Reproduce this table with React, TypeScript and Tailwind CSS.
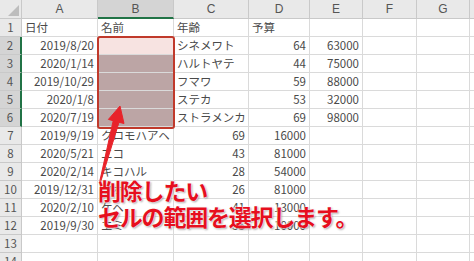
import React from 'react'

const widths = ['w-[76px]', 'w-[76px]', 'w-[75px]', 'w-[61px]', 'w-[53px]', 'w-[54px]', 'w-[53px]', 'w-[60px]']
const letters = ['A', 'B', 'C', 'D', 'E', 'F', 'G', 'H']

type Cell = string | number | null

const rows: Cell[][] = [
  ['日付', '名前', '年齢', '予算', null],
  ['2019/8/20', null, 'シネメワト', 64, 63000],
  ['2020/1/14', null, 'ハルトヤテ', 44, 75000],
  ['2019/10/29', null, 'フマワ', 59, 88000],
  ['2020/1/8', null, 'ステカ', 53, 32000],
  ['2020/7/19', null, 'ストラメンカ', 69, 98000],
  ['2019/9/19', 'クロモハアヘ', 69, 16000, null],
  ['2020/5/21', 'エコ', 43, 81000, null],
  ['2020/2/14', 'キコハル', 28, 54000, null],
  ['2019/12/31', 'ワホ', 26, 81000, null],
  ['2020/2/10', 'ケヘ', 41, 13000, null],
  ['2019/9/30', 'エミ', 55, 10000, null],
  [null, null, null, null, null],
  [null, null, null, null, null],
]

function cellBg(r: number, c: number) {
  if (c === 1 && r === 1) return 'bg-[#f7e3e1]'
  if (c === 1 && r >= 2 && r <= 5) return 'bg-[#bca5a5]'
  return 'bg-white'
}

export default function App() {
  return (
    <div className="relative w-[474px] h-[261px] overflow-hidden bg-white font-['Noto_Sans_CJK_JP',sans-serif] text-[11.5px] text-[#4a4a4a]">
      {/* column headers */}
      <div className="flex h-[19px]">
        <div className="w-[22px] shrink-0 bg-[#e9e9e9] border-r border-b border-[#c9c9c9] flex items-end justify-end p-[2px]">
          <svg width="11" height="11" viewBox="0 0 11 11">
            <polygon points="11,0 11,11 0,11" fill="#bdbdbd" />
          </svg>
        </div>
        {letters.map((l, i) => (
          <div
            key={l}
            className={`${widths[i]} shrink-0 flex items-center justify-center border-r border-[#c9c9c9] ${
              i === 1 ? 'bg-[#d4d4d4] border-b-2 border-b-[#217346]' : 'bg-[#e9e9e9] border-b border-b-[#c9c9c9]'
            }`}
          >
            <span className="font-['Liberation_Sans',sans-serif] text-[12px] text-[#555]">{l}</span>
          </div>
        ))}
      </div>

      {rows.map((row, r) => (
        <div key={r} className="flex h-[18px]">
          <div
            className={`w-[22px] shrink-0 flex items-center justify-center border-b border-[#c9c9c9] text-[#555] ${
              r >= 1 && r <= 5 ? 'bg-[#d4d4d4] border-r-2 border-r-[#217346]' : 'bg-[#e9e9e9] border-r border-r-[#c9c9c9]'
            }`}
          >
            {r + 1}
          </div>
          {widths.map((w, c) => {
            const v = c < row.length ? row[c] : null
            const right = typeof v === 'number' || (r > 0 && c === 0)
            return (
              <div
                key={c}
                className={`${w} shrink-0 flex items-center border-r border-b border-[#dadada] px-[3px] whitespace-nowrap overflow-visible ${cellBg(r, c)} ${
                  right ? 'justify-end' : 'justify-start'
                }`}
              >
                {v}
              </div>
            )
          })}
        </div>
      ))}

      {/* selection frame */}
      <div className="absolute left-[97px] top-[36px] w-[78px] h-[93px] rounded-[3px] border-2 border-[#c0392b]" />

      {/* arrow */}
      <svg className="absolute left-0 top-0" width="474" height="261" viewBox="0 0 474 261">
        <polygon
          points="120,106 124,123.5 119,122.3 100.6,182 99.6,182 113.2,120.7 108.4,119.4"
          fill="#e8232a"
          stroke="#e8232a"
          strokeWidth="1"
          strokeLinejoin="round"
        />
      </svg>

      {/* callout text */}
      <div className="absolute left-[98px] top-[177px] text-[23px] leading-[26px] font-bold tracking-[-1.2px] text-[#e60f1e] [text-shadow:0_0_2px_#fff,0_0_2px_#fff,1px_1px_2px_rgba(0,0,0,0.45)] font-['Noto_Sans_CJK_JP',sans-serif]">
        <div>削除したい</div>
        <div>セルの範囲を選択します。</div>
      </div>
    </div>
  )
}
